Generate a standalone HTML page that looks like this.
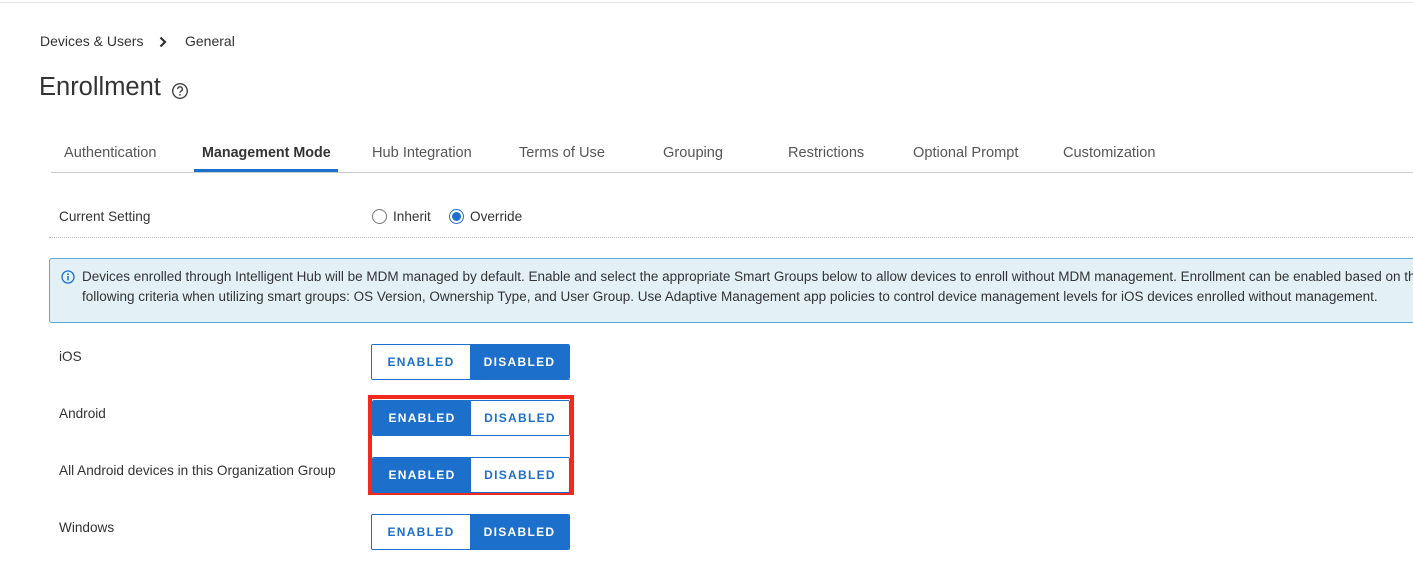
<!DOCTYPE html>
<html><head><style>
*{box-sizing:border-box;margin:0;padding:0}
body{width:1413px;height:571px;overflow:hidden;background:#fff;font-family:"Liberation Sans",sans-serif;color:#333;position:relative}
.a{position:absolute;white-space:nowrap}
.tab{position:absolute;top:145px;font-size:14.6px;color:#565656}
.lbl{font-size:13.6px;color:#333}
.btn{position:absolute;width:199px;height:36px;display:flex;border:1px solid #1d6fcc;border-radius:2px;overflow:hidden;font-size:12px;font-weight:bold;letter-spacing:1.3px}
.btn div{flex:1;display:flex;align-items:center;justify-content:center;color:#1d6fcc;background:#fff}
.btn div.on{background:#1d6fcc;color:#fff}
.btn div:first-child{flex:0 0 98px}
</style></head><body>
<div class="a" style="left:0;top:2px;width:1413px;height:1px;background:#dfe3e8"></div>
<div class="a" style="left:40px;top:33px;font-size:14px;color:#333">Devices &amp; Users</div>
<svg class="a" style="left:158px;top:36px" width="10" height="12" viewBox="0 0 10 12"><path d="M2.5 1.5 L7 6 L2.5 10.5" stroke="#333" stroke-width="2.2" fill="none"/></svg>
<div class="a" style="left:185px;top:33px;font-size:14px;color:#333">General</div>
<div class="a" style="left:39px;top:73px;font-size:25.5px;color:#333">Enrollment</div>
<svg class="a" style="left:171px;top:82px" width="18" height="18" viewBox="0 0 18 18"><circle cx="9" cy="9" r="7.3" stroke="#444" stroke-width="1.4" fill="none"/><path d="M6.7 7.2a2.3 2.3 0 1 1 3.3 2c-.7.4-1 .8-1 1.6" stroke="#444" stroke-width="1.4" fill="none"/><circle cx="9" cy="12.9" r=".9" fill="#444"/></svg>
<div class="tab" style="left:64px">Authentication</div>
<div class="tab" style="left:202px;color:#333;font-weight:600;font-size:14.3px">Management Mode</div>
<div class="tab" style="left:372px">Hub Integration</div>
<div class="tab" style="left:519px">Terms of Use</div>
<div class="tab" style="left:663px">Grouping</div>
<div class="tab" style="left:788px">Restrictions</div>
<div class="tab" style="left:913px">Optional Prompt</div>
<div class="tab" style="left:1063px">Customization</div>
<div class="a" style="left:51px;top:172px;width:1362px;height:1px;background:#c8ccd0"></div>
<div class="a" style="left:194px;top:169px;width:144px;height:3px;background:#1d6fcc"></div>
<div class="a lbl" style="left:59px;top:209px">Current Setting</div>
<div class="a" style="left:372px;top:209px;width:15px;height:15px;border:1px solid #777;border-radius:50%"></div>
<div class="a lbl" style="left:393px;top:209px">Inherit</div>
<div class="a" style="left:449px;top:209px;width:15px;height:15px;border:1px solid #1d6fcc;border-radius:50%"><div style="margin:2px;width:9px;height:9px;border-radius:50%;background:#1d6fcc"></div></div>
<div class="a lbl" style="left:470px;top:209px">Override</div>
<div class="a" style="left:49px;top:237px;width:1364px;border-top:1px dotted #bbb"></div>
<div class="a" style="left:49px;top:258px;width:1380px;height:65px;background:#e3f1f7;border:1px solid #5aa9dd;border-radius:3px"></div>
<svg class="a" style="left:61px;top:270px" width="14" height="14" viewBox="0 0 14 14"><circle cx="7" cy="7" r="6" stroke="#1d6fcc" stroke-width="1.3" fill="none"/><circle cx="7" cy="4.2" r=".9" fill="#1d6fcc"/><path d="M7 6v4.5" stroke="#1d6fcc" stroke-width="1.5"/></svg>
<div class="a" style="left:82px;top:267px;font-size:13.5px;color:#333;line-height:20px">Devices enrolled through Intelligent Hub will be MDM managed by default. Enable and select the appropriate Smart Groups below to allow devices to enroll without MDM management. Enrollment can be enabled based on the<br>following criteria when utilizing smart groups: OS Version, Ownership Type, and User Group. Use Adaptive Management app policies to control device management levels for iOS devices enrolled without management.</div>
<div class="a lbl" style="left:59px;top:349px">iOS</div>
<div class="btn" style="left:371px;top:344px"><div>ENABLED</div><div class="on">DISABLED</div></div>
<div class="a lbl" style="left:59px;top:406px">Android</div>
<div class="a lbl" style="left:59px;top:463px">All Android devices in this Organization Group</div>
<div class="a" style="left:368px;top:395px;width:206px;height:100px;border:4px solid #f2291e"></div>
<div class="btn" style="left:372px;top:400px;width:198px"><div class="on">ENABLED</div><div>DISABLED</div></div>
<div class="btn" style="left:372px;top:457px;width:198px"><div class="on">ENABLED</div><div>DISABLED</div></div>
<div class="a lbl" style="left:59px;top:520px">Windows</div>
<div class="btn" style="left:371px;top:514px"><div>ENABLED</div><div class="on">DISABLED</div></div>
</body></html>
